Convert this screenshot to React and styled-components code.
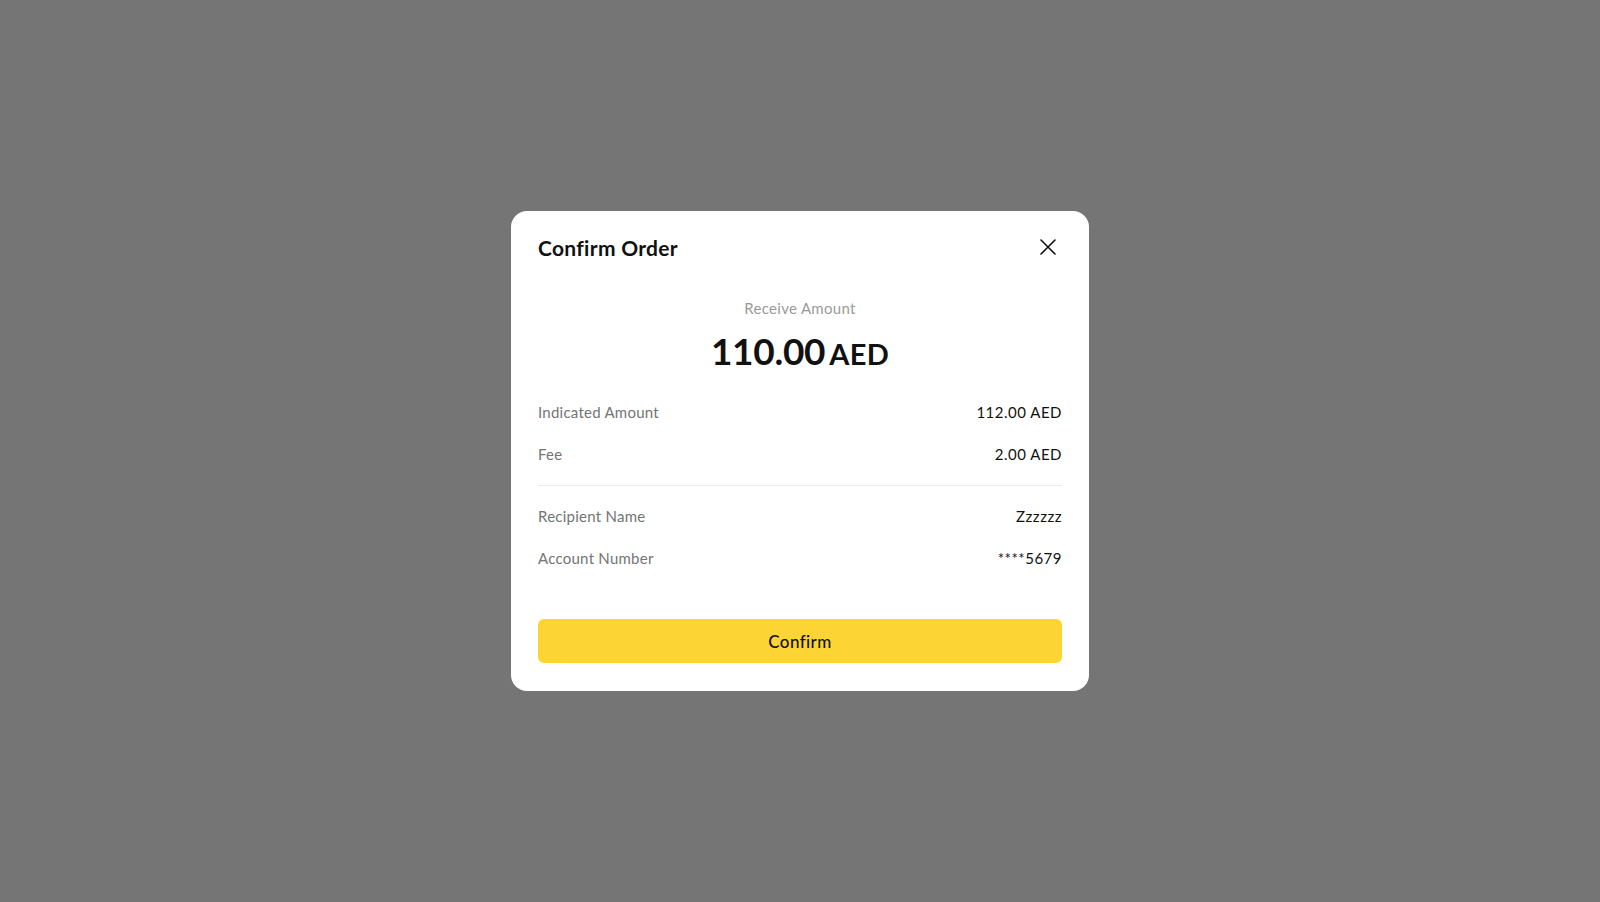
import React from "react";
import styled, { createGlobalStyle } from "styled-components";

const GlobalStyle = createGlobalStyle`
  html, body {
    margin: 0;
    padding: 0;
    background: #757575;
    font-family: Lato, "Open Sans", Arial, sans-serif;
  }
`;

const Backdrop = styled.div`
  min-height: 100vh;
  display: flex;
  align-items: center;
  justify-content: center;
`;

const Modal = styled.div`
  width: 578px;
  box-sizing: border-box;
  background: #ffffff;
  border-radius: 16px;
  padding: 24px 27px 28px;
  display: flex;
  flex-direction: column;
`;

const Header = styled.div`
  height: 24px;
  display: flex;
  align-items: center;
  justify-content: space-between;
`;

const Title = styled.h2`
  margin: 0;
  font-size: 21px;
  font-weight: 700;
  letter-spacing: 0.3px;
  color: #111;
`;

const Close = styled.button`
  border: 0;
  background: none;
  padding: 0;
  width: 24px;
  height: 24px;
  margin-right: 2px;
  display: flex;
  align-items: center;
  justify-content: center;
  cursor: pointer;
`;

const Summary = styled.div`
  margin-top: 39px;
  display: flex;
  flex-direction: column;
  align-items: center;
`;

const Caption = styled.div`
  font-size: 15px;
  line-height: 20px;
  letter-spacing: 0.3px;
  color: #9a9a9a;
`;

const Amount = styled.div`
  margin-top: 11px;
  height: 44px;
  display: flex;
  align-items: baseline;
  gap: 4px;
  color: #111;
  font-weight: 700;
`;

const Number = styled.span`
  font-size: 37px;
  line-height: 44px;
  letter-spacing: -0.3px;
`;

const Currency = styled.span`
  font-size: 29px;
  letter-spacing: 0.3px;
`;

const Group = styled.div`
  display: flex;
  flex-direction: column;
  margin-top: ${props => props.top || 0}px;
`;

const Row = styled.div`
  height: 42px;
  display: flex;
  align-items: center;
  justify-content: space-between;
  font-size: 15px;
`;

const Label = styled.span`
  color: #747474;
  letter-spacing: 0.25px;
`;

const Value = styled.span`
  color: #111;
  letter-spacing: 0.5px;
`;

const Divider = styled.hr`
  border: 0;
  border-top: 1px solid #ececec;
  margin: 10px 0 9px;
`;

const ConfirmButton = styled.button`
  margin-top: 40px;
  height: 44px;
  border: 0;
  border-radius: 6px;
  background: #fcd535;
  color: #111;
  font-family: inherit;
  font-size: 17px;
  font-weight: 500;
  letter-spacing: 0.4px;
  cursor: pointer;
`;

const CloseIcon = () => (
  <svg width="16" height="16" viewBox="0 0 16 16" fill="none">
    <path d="M1 1L15 15M15 1L1 15" stroke="#111" strokeWidth="1.6" strokeLinecap="round" />
  </svg>
);

const details = [
  [
    ["Indicated Amount", "112.00 AED"],
    ["Fee", "2.00 AED"],
  ],
  [
    ["Recipient Name", "Zzzzzz"],
    ["Account Number", "****5679"],
  ],
];

export default function App() {
  return (
    <>
      <GlobalStyle />
      <Backdrop>
        <Modal>
          <Header>
            <Title>Confirm Order</Title>
            <Close aria-label="Close">
              <CloseIcon />
            </Close>
          </Header>
          <Summary>
            <Caption>Receive Amount</Caption>
            <Amount>
              <Number>110.00</Number>
              <Currency>AED</Currency>
            </Amount>
          </Summary>
          <Group top={18}>
            {details[0].map(([k, v]) => (
              <Row key={k}>
                <Label>{k}</Label>
                <Value>{v}</Value>
              </Row>
            ))}
          </Group>
          <Divider />
          <Group>
            {details[1].map(([k, v]) => (
              <Row key={k}>
                <Label>{k}</Label>
                <Value>{v}</Value>
              </Row>
            ))}
          </Group>
          <ConfirmButton>Confirm</ConfirmButton>
        </Modal>
      </Backdrop>
    </>
  );
}
